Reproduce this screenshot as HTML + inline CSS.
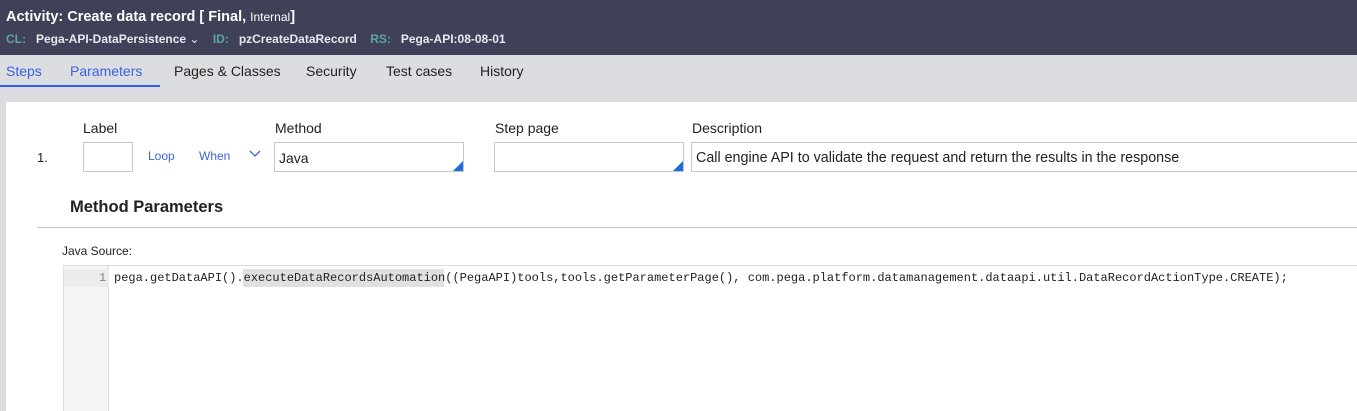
<!DOCTYPE html>
<html><head><style>
*{margin:0;padding:0;box-sizing:border-box}
body{width:1357px;height:411px;overflow:hidden;background:#dcdde1;font-family:"Liberation Sans",sans-serif;position:relative}
.a{position:absolute;white-space:nowrap}
.hdr{position:absolute;left:0;top:0;width:1357px;height:55px;background:#3f4158}
.t{color:#fff;font-weight:bold;font-size:14.5px}
.s{font-size:12px;font-weight:bold;color:#e8e8ee}
.k{color:#5da3a8}
.tab{font-size:14px;color:#222;top:63px}
.panel{position:absolute;left:6px;top:102px;width:1351px;height:309px;background:#fff}
.lbl{font-size:14px;color:#222;top:120px}
.inp{position:absolute;border:1px solid #c8c8cc;background:#fff;height:30px;top:142px}
.tri{position:absolute;right:0;bottom:0;width:0;height:0;border-left:10px solid transparent;border-bottom:10px solid #1a6de0}
.code{font-family:"Liberation Mono",monospace;font-size:12px;letter-spacing:0px;color:#222}
</style></head><body>
<div class="hdr"></div>
<div class="a t" style="left:6px;top:9px">Activity: Create data record [ Final, <span style="font-weight:normal;font-size:12px">Internal</span>]</div>
<div class="a s" style="left:6px;top:32px"><span class="k">CL:</span>&nbsp;&nbsp; Pega-API-DataPersistence <span style="font-weight:normal">&#8964;</span>&nbsp;&nbsp;&nbsp; <span class="k">ID:</span>&nbsp;&nbsp; pzCreateDataRecord&nbsp;&nbsp;&nbsp; <span class="k">RS:</span>&nbsp;&nbsp; Pega-API:08-08-01</div>
<div class="a tab" style="left:6px;color:#3a63e0">Steps</div>
<div class="a tab" style="left:70px;color:#3a63e0">Parameters</div>
<div class="a" style="left:0;top:85px;width:160px;height:2px;background:#2f5ef0"></div>
<div class="a tab" style="left:174px">Pages &amp; Classes</div>
<div class="a tab" style="left:306px">Security</div>
<div class="a tab" style="left:386px">Test cases</div>
<div class="a tab" style="left:480px">History</div>
<div class="panel"></div>
<div class="a lbl" style="left:83px">Label</div>
<div class="a lbl" style="left:275px">Method</div>
<div class="a lbl" style="left:495px">Step page</div>
<div class="a lbl" style="left:692px">Description</div>
<div class="a" style="left:37px;top:150px;font-size:13px;color:#222">1.</div>
<div class="inp" style="left:83px;width:50px"></div>
<div class="a" style="left:148px;top:149px;font-size:12px;color:#3a63e0">Loop</div>
<div class="a" style="left:199px;top:149px;font-size:12px;color:#3a63e0">When</div>
<svg class="a" style="left:249px;top:150px" width="12" height="8"><path d="M1 1L6 6L11 1" stroke="#3a63e0" fill="none" stroke-width="1.3"/></svg>
<div class="inp" style="left:274px;width:190px"><span class="a" style="left:4px;top:7px;font-size:14px;color:#222">Java</span><div class="tri"></div></div>
<div class="inp" style="left:494px;width:190px"><div class="tri"></div></div>
<div class="inp" style="left:691px;width:680px"><span class="a" style="left:4px;top:7px;font-size:14.3px;color:#222">Call engine API to validate the request and return the results in the response</span></div>
<div class="a" style="left:70px;top:198px;font-size:16.5px;font-weight:bold;color:#222">Method Parameters</div>
<div class="a" style="left:37px;top:227px;width:1320px;height:1px;background:#c8c8cc"></div>
<div class="a" style="left:62px;top:244px;font-size:12px;color:#222">Java Source:</div>
<div class="a" style="left:63px;top:265px;width:1294px;height:146px;border-top:1px solid #ddd;border-left:1px solid #ddd;background:#fff"></div>
<div class="a" style="left:64px;top:266px;width:45px;height:145px;background:#f5f5f5;border-right:1px solid #ddd"></div>
<div class="a" style="left:64px;top:269px;width:45px;height:18px;background:#ececec"></div>
<div class="a code" style="left:99px;top:271px;color:#888">1</div>
<div class="a" style="left:243px;top:269px;width:201px;height:18px;background:#e0e0e0"></div>
<div class="a code" style="left:114px;top:271px">pega.getDataAPI().executeDataRecordsAutomation((PegaAPI)tools,tools.getParameterPage(), com.pega.platform.datamanagement.dataapi.util.DataRecordActionType.CREATE);</div>
</body></html>
